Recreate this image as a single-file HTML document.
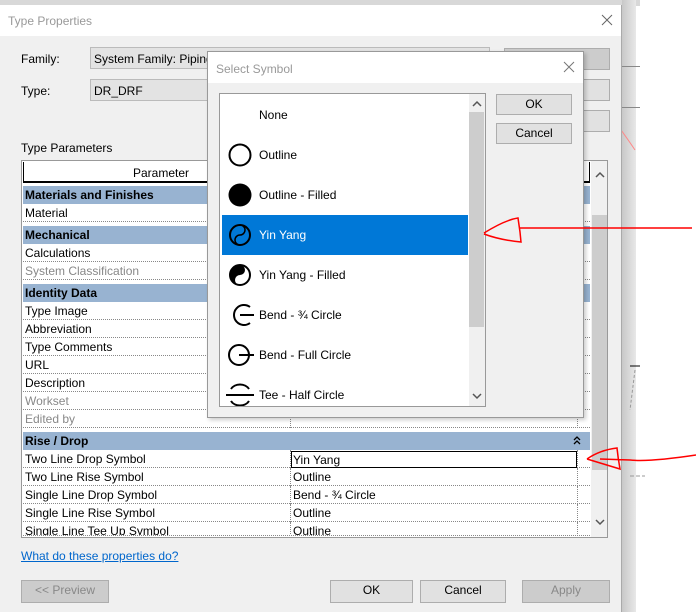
<!DOCTYPE html>
<html><head><style>
*{margin:0;padding:0;box-sizing:border-box}
body{width:696px;height:612px;background:#fff;position:relative;overflow:hidden;font-family:"Liberation Sans",sans-serif;font-size:12px;color:#000}
.a{position:absolute}
.btn{position:absolute;background:#e1e1e1;border:1px solid #adadad;text-align:center;line-height:19px}
.row{position:absolute;left:23px;width:567px;height:18px;border-bottom:1px dotted #888;background:#fff;line-height:19px}
.row span{position:absolute;left:2px}
.row i{position:absolute;left:267px;top:0;height:18px;border-left:1px dotted #888}
.row b.v{position:absolute;left:270px;font-weight:normal}
.row u{position:absolute;left:554px;top:0;height:18px;border-left:1px dotted #888}
.grp{position:absolute;left:23px;width:567px;height:18px;background:#98b3d1;font-weight:bold;line-height:19px;padding-left:2px}
.gray{color:#888}
.it{position:absolute;left:2px;width:246px;height:40px;line-height:40px}
.it span{position:absolute;left:37px}
</style></head><body>
<div class="a" style="left:0;top:0;width:640px;height:6px;background:#d8d8d8"></div>
<div class="a" style="left:622px;top:0;width:14px;height:612px;background:linear-gradient(90deg,#c8c8c8,#e8e8e8)"></div>
<div class="a" style="left:610px;top:66px;width:30px;height:42px;border:1px solid #888;border-right:none"></div>
<svg class="a" style="left:600px;top:110px" width="96" height="400"><path d="M10 5 Q25 25 35 40" stroke="#f88" fill="none"/><path d="M35 260 L30 300" stroke="#999" stroke-dasharray="3 2" fill="none"/><line x1="30" y1="256" x2="40" y2="256" stroke="#000"/><line x1="30" y1="366" x2="45" y2="366" stroke="#999" stroke-dasharray="4 2"/></svg>

<div class="a" style="left:0;top:5px;width:622px;height:607px;background:#f0f0f0;border-right:1px solid #aaa">
 <div class="a" style="left:0;top:0;width:621px;height:31px;background:#fff"></div>
 <div class="a" style="left:8px;top:9px;font-size:12px;color:#999">Type Properties</div>
 <svg class="a" style="left:601px;top:9px" width="12" height="12"><path d="M1 1L11 11M11 1L1 11" stroke="#666" stroke-width="1"/></svg>
</div>
<div class="a" style="left:21px;top:52px">Family:</div>
<div class="a" style="left:90px;top:47px;width:400px;height:22px;background:#e3e3e3;border:1px solid #bbb;padding:4px 3px">System Family: Piping Sy</div>
<div class="a" style="left:21px;top:84px">Type:</div>
<div class="a" style="left:90px;top:79px;width:400px;height:22px;background:#e3e3e3;border:1px solid #bbb;padding:4px 3px">DR_DRF</div>
<div class="btn" style="left:504px;top:48px;width:106px;height:22px;background:#ccc"></div>
<div class="btn" style="left:504px;top:79px;width:106px;height:22px"></div>
<div class="btn" style="left:504px;top:110px;width:106px;height:22px"></div>
<div class="a" style="left:21px;top:141px">Type Parameters</div>

<div class="a" style="left:21px;top:160px;width:587px;height:378px;background:#fff;border:1px solid #999;overflow:hidden">
 <div class="a" style="left:1px;top:1px;width:567px;height:21px;border-bottom:2px solid #000;border-left:1px solid #000;border-right:1px solid #000"><div class="a" style="left:109px;top:4px">Parameter</div><div class="a" style="left:264px;top:-1px;height:21px;border-left:1px solid #aaa"></div></div>
 <div class="a" style="left:569px;top:0;width:17px;height:376px;background:#f0f0f0"></div>
 <div class="a" style="left:570px;top:54px;width:15px;height:255px;background:#cdcdcd"></div>
 <svg class="a" style="left:573px;top:10px" width="10" height="8"><path d="M1 6L5 2L9 6" stroke="#555" stroke-width="1.5" fill="none"/></svg>
 <svg class="a" style="left:573px;top:357px" width="10" height="8"><path d="M1 2L5 6L9 2" stroke="#555" stroke-width="1.5" fill="none"/></svg>
</div>
<div class="grp" style="top:186px">Materials and Finishes</div>
<div class="row" style="top:204px"><span>Material</span><i></i><u></u></div>
<div class="grp" style="top:226px">Mechanical</div>
<div class="row" style="top:244px"><span>Calculations</span><i></i><u></u></div>
<div class="row" style="top:262px"><span class="gray">System Classification</span><i></i><u></u></div>
<div class="grp" style="top:284px">Identity Data</div>
<div class="row" style="top:302px"><span>Type Image</span><i></i><u></u></div>
<div class="row" style="top:320px"><span>Abbreviation</span><i></i><u></u></div>
<div class="row" style="top:338px"><span>Type Comments</span><i></i><u></u></div>
<div class="row" style="top:356px"><span>URL</span><i></i><u></u></div>
<div class="row" style="top:374px"><span>Description</span><i></i><u></u></div>
<div class="row" style="top:392px"><span class="gray">Workset</span><i></i><u></u></div>
<div class="row" style="top:410px"><span class="gray">Edited by</span><i></i><u></u></div>
<div class="grp" style="top:432px">Rise / Drop<svg style="position:absolute;left:550px;top:4px" width="8" height="10"><path d="M1 4L4 1L7 4M1 8L4 5L7 8" stroke="#000" stroke-width="1.3" fill="none"/></svg></div>
<div class="row" style="top:450px"><span>Two Line Drop Symbol</span><i></i><b class="v" style="left:268px;top:1px;width:286px;height:17px;border:1px solid #000;line-height:16px;padding-left:1px">Yin Yang</b><u></u></div>
<div class="row" style="top:468px"><span>Two Line Rise Symbol</span><i></i><b class="v">Outline</b><u></u></div>
<div class="row" style="top:486px"><span>Single Line Drop Symbol</span><i></i><b class="v">Bend - ¾ Circle</b><u></u></div>
<div class="row" style="top:504px"><span>Single Line Rise Symbol</span><i></i><b class="v">Outline</b><u></u></div>
<div class="row" style="top:522px;height:14px;overflow:hidden"><span>Single Line Tee Up Symbol</span><i></i><b class="v">Outline</b><u></u></div>

<div class="a" style="left:21px;top:549px;color:#0066cc;text-decoration:underline">What do these properties do?</div>
<div class="btn" style="left:21px;top:580px;width:88px;height:23px;background:#ccc;color:#888">&lt;&lt; Preview</div>
<div class="btn" style="left:330px;top:580px;width:83px;height:23px">OK</div>
<div class="btn" style="left:420px;top:580px;width:86px;height:23px">Cancel</div>
<div class="btn" style="left:522px;top:580px;width:88px;height:23px;background:#ccc;color:#888">Apply</div>

<div class="a" style="left:207px;top:51px;width:377px;height:367px;background:#f0f0f0;border:1px solid #999;box-shadow:2px 2px 4px rgba(0,0,0,.2)">
 <div class="a" style="left:0;top:0;width:375px;height:31px;background:#fff"></div>
 <div class="a" style="left:8px;top:10px;color:#999">Select Symbol</div>
 <svg class="a" style="left:355px;top:9px" width="12" height="12"><path d="M1 1L11 11M11 1L1 11" stroke="#777" stroke-width="1"/></svg>
 <div class="btn" style="left:288px;top:42px;width:76px;height:21px">OK</div>
 <div class="btn" style="left:288px;top:71px;width:76px;height:21px">Cancel</div>
 <div class="a" style="left:11px;top:41px;width:267px;height:314px;background:#fff;border:1px solid #999;overflow:hidden">
  <div class="it" style="top:1px"><span>None</span></div>
  <div class="it" style="top:41px"><svg class="a" style="left:6px;top:8px" width="24" height="24"><circle cx="12" cy="12" r="10.5" fill="none" stroke="#000" stroke-width="2"/></svg><span>Outline</span></div>
  <div class="it" style="top:81px"><svg class="a" style="left:6px;top:8px" width="24" height="24"><circle cx="12" cy="12" r="11.5" fill="#000"/></svg><span>Outline - Filled</span></div>
  <div class="it" style="top:121px;background:#0078d7;color:#fff"><svg class="a" style="left:6px;top:8px" width="24" height="24"><circle cx="12" cy="12" r="10" fill="none" stroke="#000" stroke-width="2"/><path d="M12 2 A5 5 0 0 1 12 12 A5 5 0 0 0 12 22" fill="none" stroke="#000" stroke-width="1.5"/></svg><span>Yin Yang</span></div>
  <div class="it" style="top:161px"><svg class="a" style="left:6px;top:8px" width="24" height="24"><circle cx="12" cy="12" r="10" fill="none" stroke="#000" stroke-width="2"/><path d="M12 2 A10 10 0 0 0 12 22 A5 5 0 0 1 12 12 A5 5 0 0 0 12 2Z" fill="#000"/></svg><span>Yin Yang - Filled</span></div>
  <div class="it" style="top:201px"><svg class="a" style="left:6px;top:8px" width="26" height="24"><path d="M22 4 A10 10 0 1 0 22 20" fill="none" stroke="#000" stroke-width="2"/><line x1="12" y1="12" x2="26" y2="12" stroke="#000" stroke-width="2"/></svg><span>Bend - ¾ Circle</span></div>
  <div class="it" style="top:241px"><svg class="a" style="left:4px;top:8px" width="28" height="24"><circle cx="13" cy="12" r="10" fill="none" stroke="#000" stroke-width="2"/><line x1="13" y1="12" x2="28" y2="12" stroke="#000" stroke-width="2"/></svg><span>Bend - Full Circle</span></div>
  <div class="it" style="top:281px"><svg class="a" style="left:4px;top:8px" width="30" height="26"><path d="M5 6 A10 8 0 0 1 23 6 M5 18 A10 8 0 0 0 23 18" fill="none" stroke="#000" stroke-width="2"/><line x1="0" y1="12" x2="28" y2="12" stroke="#000" stroke-width="2"/></svg><span>Tee - Half Circle</span></div>
  <div class="a" style="left:249px;top:0;width:16px;height:312px;background:#f0f0f0"></div>
  <div class="a" style="left:249px;top:18px;width:15px;height:215px;background:#cdcdcd"></div>
  <svg class="a" style="left:252px;top:6px" width="10" height="8"><path d="M1 6L5 2L9 6" stroke="#555" stroke-width="1.5" fill="none"/></svg>
  <svg class="a" style="left:252px;top:298px" width="10" height="8"><path d="M1 2L5 6L9 2" stroke="#555" stroke-width="1.5" fill="none"/></svg>
 </div>
</div>

<svg class="a" style="left:0;top:0" width="696" height="612"><g fill="none" stroke="#f00" stroke-width="1.5"><path d="M692 228 L520 228 M484 233 Q505 220 518 218 L520 232 L521 242 Q500 240 484 234"/><path d="M696 455 Q650 462 630 460 L600 459 M587 459 Q600 450 617 448 Q618 458 620 469 Q600 463 587 459"/></g></svg>
</body></html>
